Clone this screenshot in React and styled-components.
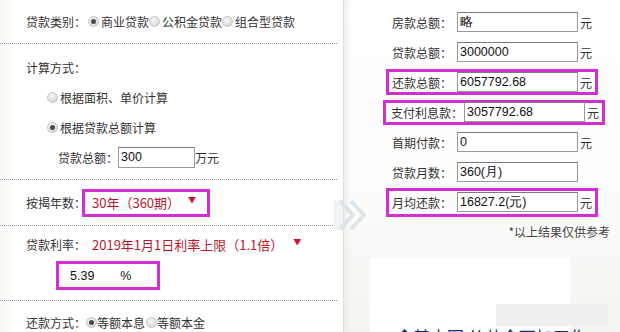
import React from "react";
import styled, { createGlobalStyle } from "styled-components";

const Global = createGlobalStyle`
  html, body { margin: 0; padding: 0; background: #fff; }
  body { font-family: "Noto Sans CJK SC", "Noto Sans", sans-serif; font-size: 12px; color: #333; }
`;

const Page = styled.div`
  position: relative;
  width: 620px;
  height: 332px;
  overflow: hidden;
  display: flex;
`;

const Left = styled.div`
  width: 343px;
  flex: none;
  background: linear-gradient(90deg, #f6f8f2 0px, #fff 14px);
`;

const Section = styled.div`
  height: ${(p) => p.$h}px;
  padding: ${(p) => p.$pad || "0"};
  padding-left: 26px;
  margin-right: 6px;
  box-sizing: border-box;
  border-bottom: 1px dotted #8da3a6;
  display: flex;
  flex-direction: column;
`;

const LastSection = styled(Section)`
  border-bottom: none;
`;

const Row = styled.div`
  height: ${(p) => p.$h || 30}px;
  display: flex;
  align-items: center;
  padding-left: ${(p) => p.$indent || 0}px;
  white-space: nowrap;
`;

const Label = styled.span`
  display: inline-block;
  width: ${(p) => (p.$w ? p.$w + "px" : "auto")};
  flex: none;
`;

const Radio = styled.span`
  width: 11px;
  height: 11px;
  border-radius: 50%;
  border: 1px solid #c4c4c4;
  background: radial-gradient(circle at 40% 35%, #f6f6f6 0%, #e2e2e2 55%, #cfcfcf 100%);
  box-sizing: border-box;
  display: inline-flex;
  align-items: center;
  justify-content: center;
  margin: 0 ${(p) => p.$mr ?? 2}px 0 ${(p) => p.$ml ?? 1}px;
  flex: none;
  &::after {
    content: "";
    width: 5px;
    height: 5px;
    border-radius: 50%;
    background: ${(p) => (p.$on ? "#4a4a4a" : "transparent")};
  }
`;

const TextInput = styled.div`
  width: ${(p) => p.$w}px;
  height: ${(p) => p.$h || 20}px;
  box-sizing: border-box;
  border: 1px solid #9a9a9a;
  border-top-color: #7a7a7a;
  background: #fff;
  font-family: "Liberation Sans", Arial, sans-serif;
  font-size: 12.5px;
  color: #111;
  line-height: 18px;
  padding-left: 2px;
  margin-left: ${(p) => p.$ml || 0}px;
  flex: none;
`;

const Red = styled.span`
  color: #b8172b;
  font-size: 13px;
  margin-left: ${(p) => p.$ml || 0}px;
`;

const Arrow = styled.span`
  color: #d0102a;
  font-size: 8px;
  margin-left: ${(p) => p.$ml || 0}px;
  transform: translateY(-3px);
`;

const Pink = styled.div`
  border: 3px solid #d22fd2;
  box-sizing: border-box;
  height: ${(p) => p.$h}px;
  width: ${(p) => (p.$w ? p.$w + "px" : "auto")};
  display: flex;
  align-items: center;
  padding-left: ${(p) => p.$pl || 0}px;
  padding-right: ${(p) => p.$pr || 0}px;
  margin-left: ${(p) => p.$ml || 0}px;
  flex: none;
`;

const Mono = styled.span`
  font-family: "Liberation Sans", Arial, sans-serif;
  font-size: 12.5px;
  color: #111;
  margin-left: ${(p) => p.$ml || 0}px;
`;

const Right = styled.div`
  flex: 1;
  position: relative;
  border-left: 1px solid #dde2d8;
  box-shadow: inset 6px 0 6px -4px #e6ebe2;
  background: linear-gradient(180deg, #fff 0%, #fdfdfc 55%, #f3f5f0 100%);
  padding-top: 7px;
  display: flex;
  flex-direction: column;
`;

const RRow = styled.div`
  height: 30px;
  display: flex;
  align-items: center;
  padding-left: ${(p) => p.$pl ?? 42}px;
  white-space: nowrap;
`;

const RLabel = styled.span`
  width: ${(p) => p.$w}px;
  text-align: right;
  flex: none;
  color: #333;
`;

const Unit = styled.span`
  margin-left: 2px;
  color: #333;
`;

const Note = styled.div`
  text-align: right;
  padding-right: 10px;
  margin-top: 7px;
  color: #444;
  line-height: 16px;
`;

const Ad = styled.div`
  margin: 18px 0 0 26px;
  width: 200px;
  flex: 1;
  background: #fff;
  position: relative;
  display: flex;
  flex-direction: column;
  justify-content: flex-end;
`;

const AdShade = styled.div`
  position: absolute;
  left: 126px;
  top: 46px;
  width: 112px;
  height: 22px;
  background: #eeeff0;
`;

const AdText = styled.div`
  color: #1a2a7a;
  font-size: 17px;
  line-height: 22px;
  margin-bottom: -16px;
  padding-left: 26px;
  white-space: nowrap;
  position: relative;
`;

const Chevron = styled.svg`
  position: absolute;
  left: 334px;
  top: 198px;
`;

export default function App() {
  return (
    <Page>
      <Global />
      <Left>
        <Section $h={44}>
          <Row $h={43}>
            <Label>贷款类别：</Label>
            <Radio $on $ml={2} />
            <span>商业贷款</span>
            <Radio $ml={0} />
            <span>公积金贷款</span>
            <Radio $ml={0} />
            <span>组合型贷款</span>
          </Row>
        </Section>
        <Section $h={136} $pad="8px 0 0 0">
          <Row>
            <Label>计算方式：</Label>
          </Row>
          <Row $indent={20}>
            <Radio />
            <span>根据面积、单价计算</span>
          </Row>
          <Row $indent={20}>
            <Radio $on />
            <span>根据贷款总额计算</span>
          </Row>
          <Row $indent={32}>
            <Label $w={60}>贷款总额：</Label>
            <TextInput $w={77} $h={21}>300</TextInput>
            <span>万元</span>
          </Row>
        </Section>
        <Section $h={46}>
          <Row $h={45}>
            <Label $w={56}>按揭年数：</Label>
            <Pink $h={28} $w={128} $pl={7}>
              <Red>30年（360期）</Red>
              <Arrow $ml={8}>▼</Arrow>
            </Pink>
          </Row>
        </Section>
        <Section $h={75} $pad="8px 0 0 0">
          <Row $h={20}>
            <Label $w={60}>贷款利率：</Label>
            <Red $ml={6}>2019年1月1日利率上限（1.1倍）</Red>
            <Arrow $ml={10}>▼</Arrow>
          </Row>
          <Row $h={29} style={{ marginTop: 7 }}>
            <Pink $h={29} $w={104} $pl={11} $ml={30}>
              <Mono>5.39</Mono>
              <Mono $ml={26}>%</Mono>
            </Pink>
          </Row>
        </Section>
        <LastSection $h={31} $pad="12px 0 0 0">
          <Row $h={20}>
            <Label>还款方式：</Label>
            <Radio $on $ml={0} $mr={0} />
            <span>等额本息</span>
            <Radio $ml={1} $mr={0} />
            <span>等额本金</span>
          </Row>
        </LastSection>
      </Left>
      <Right>
        <RRow>
          <RLabel $w={66}>房款总额：</RLabel>
          <TextInput $w={121} $ml={5}>略</TextInput>
          <Unit>元</Unit>
        </RRow>
        <RRow>
          <RLabel $w={66}>贷款总额：</RLabel>
          <TextInput $w={121} $ml={5}>3000000</TextInput>
          <Unit>元</Unit>
        </RRow>
        <RRow>
          <Pink $h={26} $pr={3}>
            <RLabel $w={63}>还款总额：</RLabel>
            <TextInput $w={121} $ml={5}>6057792.68</TextInput>
            <Unit>元</Unit>
          </Pink>
        </RRow>
        <RRow $pl={39}>
          <Pink $h={25} $pl={5} $pr={3}>
            <RLabel $w={72}>支付利息款：</RLabel>
            <TextInput $w={121} $ml={1}>3057792.68</TextInput>
            <Unit>元</Unit>
          </Pink>
        </RRow>
        <RRow>
          <RLabel $w={66}>首期付款：</RLabel>
          <TextInput $w={121} $ml={5}>0</TextInput>
          <Unit>元</Unit>
        </RRow>
        <RRow>
          <RLabel $w={66}>贷款月数：</RLabel>
          <TextInput $w={121} $ml={5}>360(月)</TextInput>
        </RRow>
        <RRow>
          <Pink $h={29} $pr={3}>
            <RLabel $w={63}>月均还款：</RLabel>
            <TextInput $w={121} $ml={5}>16827.2(元)</TextInput>
            <Unit>元</Unit>
          </Pink>
        </RRow>
        <Note>*以上结果仅供参考</Note>
        <Ad>
          <AdShade />
          <AdText>◆基本图 从共今面加工作</AdText>
        </Ad>
      </Right>
      <Chevron width="40" height="34" viewBox="0 0 40 34">
        <rect x="0" y="2" width="9" height="30" fill="#eef3f6" />
        <path d="M6 3 L19 17 L6 31" fill="none" stroke="#dce5ea" strokeWidth="4" />
        <path d="M17 3 L30 17 L17 31" fill="none" stroke="#dce5ea" strokeWidth="4" />
      </Chevron>
    </Page>
  );
}
